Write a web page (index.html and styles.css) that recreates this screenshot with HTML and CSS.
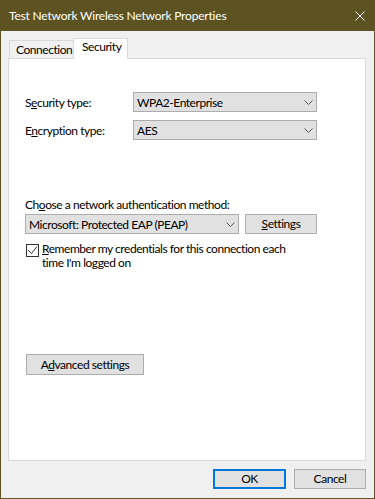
FILE: index.html
```html
<!DOCTYPE html>
<html>
<head>
<meta charset="utf-8">
<link rel="stylesheet" href="styles.css">
</head>
<body>
<div class="window">
  <div class="titlebar">
    <span class="title">Test Network Wireless Network Properties</span>
    <svg class="close" width="10" height="10" viewBox="0 0 10 10"><path d="M0.5 0.5L9.5 9.5M9.5 0.5L0.5 9.5" stroke="#fff" stroke-width="1" fill="none"/></svg>
  </div>
  <div class="main">
    <div class="tabs">
      <div class="tab tab-conn">Connection</div>
      <div class="tab tab-active">Security</div>
    </div>
    <div class="panel">
      <div class="row">
        <span class="label">S<u>e</u>curity type:</span>
        <div class="select select-type"><span>WPA2-Enterprise</span><svg class="chev" width="9" height="5" viewBox="0 0 9 5"><path d="M0.5 0.5L4.5 4.5L8.5 0.5" stroke="#555" fill="none"/></svg></div>
      </div>
      <div class="row">
        <span class="label">E<u>n</u>cryption type:</span>
        <div class="select select-type"><span>AES</span><svg class="chev" width="9" height="5" viewBox="0 0 9 5"><path d="M0.5 0.5L4.5 4.5L8.5 0.5" stroke="#555" fill="none"/></svg></div>
      </div>
      <div class="auth-label">Ch<u>o</u>ose a network authentication method:</div>
      <div class="auth-row">
        <div class="select select-auth"><span>Microsoft: Protected EAP (PEAP)</span><svg class="chev" width="9" height="5" viewBox="0 0 9 5"><path d="M0.5 0.5L4.5 4.5L8.5 0.5" stroke="#555" fill="none"/></svg></div>
        <button class="btn btn-settings"><u>S</u>ettings</button>
      </div>
      <div class="check-row">
        <span class="checkbox"><svg width="11" height="11" viewBox="0 0 11 11"><path d="M1 5L4.5 8.5L10 1.5" stroke="#333" stroke-width="1" fill="none"/></svg></span>
        <span class="check-text"><u>R</u>emember my credentials for this connection each<br>time I'm logged on</span>
      </div>
      <button class="btn btn-adv">A<u>d</u>vanced settings</button>
    </div>
    <div class="footer">
      <button class="btn btn-ok">OK</button>
      <button class="btn btn-cancel">Cancel</button>
    </div>
  </div>
</div>
</body>
</html>
```
FILE: styles.css
```css
html, body {
  margin: 0;
  padding: 0;
}
body {
  font-family: Lato, "Liberation Sans", sans-serif;
  font-size: 12px;
  letter-spacing: -0.45px;
  color: #000;
  background: #f0f0f0;
}
.window {
  width: 375px;
  height: 499px;
  box-sizing: border-box;
  border: 1px solid #5d5322;
  border-top: none;
  background: #f0f0f0;
  display: flex;
  flex-direction: column;
}
.titlebar {
  height: 31px;
  flex: none;
  background: #5d5322;
  color: #fff;
  display: flex;
  align-items: center;
  justify-content: space-between;
  padding: 0 9px 0 8px;
}
.title {
  letter-spacing: -0.2px;
}
.close {
  display: block;
}
.main {
  flex: 1;
  display: flex;
  flex-direction: column;
  padding: 7px 8px 0 7px;
}
.tabs {
  display: flex;
  height: 21px;
  margin-left: 1px;
  margin-bottom: -1px;
  align-items: flex-end;
}
.tab {
  box-sizing: border-box;
  border: 1px solid #d9d9d9;
  border-bottom: none;
  line-height: 14px;
  padding-top: 1px;
  white-space: nowrap;
}
.tab-conn {
  width: 64px;
  height: 19px;
  border-right: none;
  background: #f0f0f0;
  padding-left: 6px;
  padding-top: 2px;
}
.tab-active {
  width: 55px;
  height: 21px;
  background: #fff;
  padding-left: 8px;
  position: relative;
  z-index: 1;
}
.panel {
  box-sizing: border-box;
  height: 403px;
  background: #fff;
  border: 1px solid #d9d9d9;
  padding: 33px 0 0 16px;
  display: flex;
  flex-direction: column;
  align-items: flex-start;
}
.row {
  display: flex;
  align-items: center;
  height: 20px;
}
.row + .row {
  margin-top: 8px;
}
.label {
  width: 108px;
}
.select {
  box-sizing: border-box;
  height: 20px;
  border: 1px solid #adadad;
  background: #e1e1e1;
  display: flex;
  align-items: center;
  justify-content: space-between;
  padding: 0 3px 0 3px;
}
.select-type {
  width: 184px;
}
.select-auth {
  width: 214px;
}
.chev {
  display: block;
}
.auth-label {
  margin-top: 57px;
  margin-bottom: 1px;
  line-height: 16px;
}
.auth-row {
  display: flex;
  gap: 6px;
}
.btn {
  box-sizing: border-box;
  height: 20px;
  border: 1px solid #adadad;
  background: #e1e1e1;
  font-family: inherit;
  font-size: 12px;
  letter-spacing: -0.45px;
  color: #000;
  padding: 0;
  line-height: 14px;
}
.btn-settings {
  width: 72px;
}
.check-row {
  display: flex;
  align-items: flex-start;
  margin-top: 8px;
  margin-left: 1px;
}
.checkbox {
  box-sizing: border-box;
  width: 13px;
  height: 13px;
  border: 1px solid #333;
  background: #fff;
  margin-top: 2px;
  flex: none;
}
.checkbox svg {
  display: block;
}
.check-text {
  margin-left: 3px;
  line-height: 14px;
}
.btn-adv {
  width: 118px;
  height: 21px;
  margin-top: 84px;
  margin-left: 1px;
}
.footer {
  display: flex;
  justify-content: flex-end;
  gap: 8px;
  margin-top: 8px;
}
.btn-ok {
  width: 73px;
  border: 2px solid #0078d7;
}
.btn-cancel {
  width: 72px;
}
```
